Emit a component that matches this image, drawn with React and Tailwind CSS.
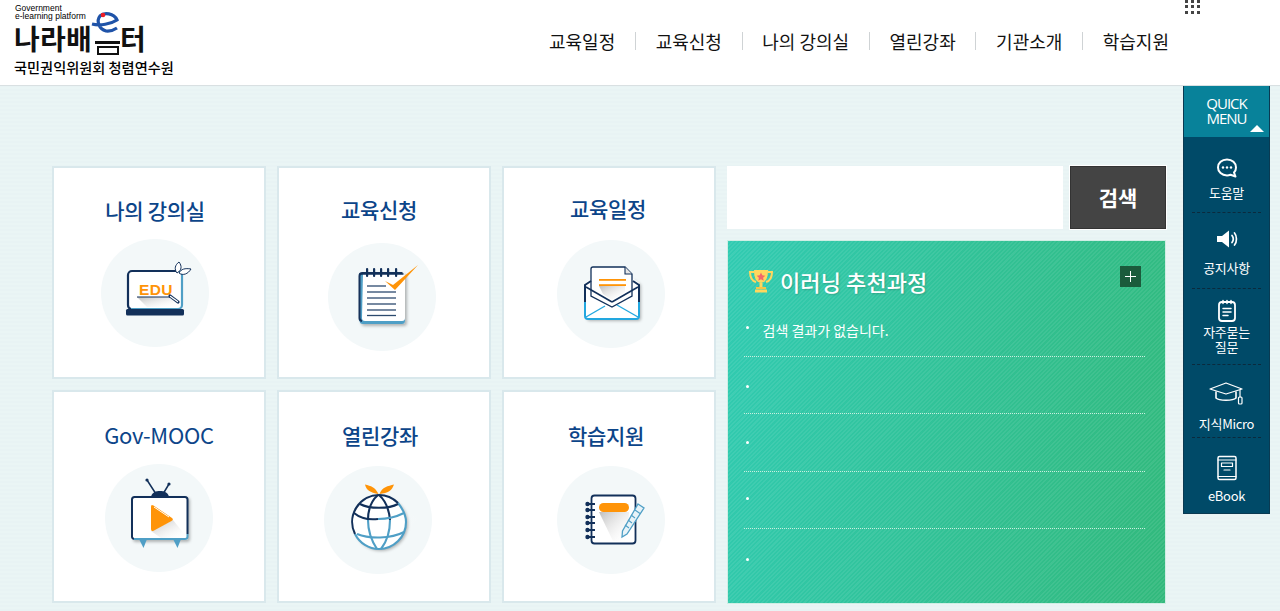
import React from "react";

const Navy = "#12305a";
const Blue = "#4f9fc6";
const Orange = "#ff9408";

function Defs({ id, to = "#bdbdbd" }) {
  return (
    <defs>
      <linearGradient id={id} x1="0" y1="0" x2="1" y2="1">
        <stop offset="0" stopColor={to} />
        <stop offset="1" stopColor="#ffffff" stopOpacity="0" />
      </linearGradient>
      <filter id={id + "s"} x="-20%" y="-20%" width="150%" height="150%">
        <feDropShadow dx="2" dy="2" stdDeviation="1.6" floodColor="#000" floodOpacity="0.28" />
      </filter>
    </defs>
  );
}

function LaptopIcon() {
  return (
    <svg viewBox="0 0 108 108" className="w-[108px] h-[108px]">
      <Defs id="a" />
      <path d="M81 32H31a4 4 0 0 0-4 4v31a4 4 0 0 0 4 4h46a4 4 0 0 0 4-4z" fill="#fff" />
      <path d="M30 70a4 4 0 0 1-3-4V36a4 4 0 0 1 4-4h46" fill="none" stroke={Navy} strokeWidth="2.2" />
      <path d="M77 32a4 4 0 0 1 4 4v30a4 4 0 0 1-4 4H30" fill="none" stroke={Blue} strokeWidth="2.2" />
      <rect x="25" y="70" width="58" height="6.5" rx="1.5" fill={Navy} />
      <polygon points="36,58 69,58 76,68 46,68" fill="url(#a)" />
      <text x="38" y="56" fontSize="15.5" fontWeight="700" fill={Orange} fontFamily="'Liberation Sans',sans-serif" letterSpacing="0.4">EDU</text>
      <path d="M36 58H69" stroke={Navy} strokeWidth="1.2" />
      <path d="M69 57l8 6" stroke={Navy} strokeWidth="3.2" strokeLinecap="round" />
      <path d="M69.5 57.5l7 5" stroke="#fff" strokeWidth="1.3" strokeLinecap="round" />
      <path d="M76 34c-3-4-2-8 2-11 3 4 3 8-2 11z" fill="#fff" stroke={Navy} strokeWidth="1" />
      <path d="M78 34c2-4 6-5 12-4-3 5-8 7-12 4z" fill="#fff" stroke={Navy} strokeWidth="1" />
    </svg>
  );
}

function NoteIcon() {
  return (
    <svg viewBox="0 0 108 108" className="w-[108px] h-[108px]">
      <Defs id="b" />
      <g filter="url(#bs)">
        <rect x="31.5" y="30" width="45.5" height="51" rx="3.5" fill={Blue} />
        <path d="M35 30h39a3 3 0 0 1 3 3v42a3 3 0 0 1-3 3H37a3 3 0 0 1-3-3z" fill="#fff" />
        <path d="M34 78a3 3 0 0 1-2.5-3V33a3 3 0 0 1 3-3h40" fill="none" stroke={Navy} strokeWidth="2" />
      </g>
      {[39, 46, 53, 60, 68].map((x) => (
        <rect key={x} x={x - 1} y="25" width="2.2" height="9" rx="1" fill={Navy} />
      ))}
      <path d="M31.5 31h44" stroke={Navy} strokeWidth="1.6" />
      <g stroke="#2c4a6e" strokeWidth="1.3">
        <path d="M39 43H58" />
        <path d="M39 49H68" />
        <path d="M39 55H68" />
        <path d="M39 61H68" />
        <path d="M39 67H68" />
        <path d="M39 72.5H68" />
      </g>
      <polygon points="57,38 65,42 90,22 67,47" fill={Orange} />
    </svg>
  );
}

function MailIcon() {
  return (
    <svg viewBox="0 0 108 108" className="w-[108px] h-[108px]">
      <Defs id="c" />
      <g filter="url(#cs)">
        <path d="M28 43L35 38V55H75V38L82 43V76a3 3 0 0 1-3 3H31a3 3 0 0 1-3-3z" fill="#fff" />
      </g>
      <path d="M34 56V29a2 2 0 0 1 2-2H68l7 7V56L55 67z" fill="#fff" stroke={Navy} strokeWidth="1.3" />
      <path d="M68 27v7h7" fill="#e6e6e6" stroke={Navy} strokeWidth="1.1" />
      <polygon points="42,46 68,46 68,52 55,60 46,54" fill="url(#c)" />
      <rect x="42" y="39" width="27" height="1.8" fill={Orange} />
      <rect x="42" y="44.2" width="27" height="1.8" fill={Orange} />
      <path d="M34 41L28 45V62" fill="none" stroke={Navy} strokeWidth="2" />
      <path d="M76 41L82 45V62" fill="none" stroke={Navy} strokeWidth="2" />
      <path d="M28 62V76a3 3 0 0 0 3 3H79a3 3 0 0 0 3-3V62" fill="none" stroke="#22a7df" strokeWidth="2" />
      <path d="M29 47L55 62" stroke={Navy} strokeWidth="1.6" />
      <path d="M81 47L55 62" stroke={Navy} strokeWidth="1.6" />
      <path d="M29 77L48 66" stroke="#22a7df" strokeWidth="1.4" />
      <path d="M81 77L60 65" stroke="#22a7df" strokeWidth="1.4" />
    </svg>
  );
}

function TvIcon() {
  return (
    <svg viewBox="0 0 108 108" className="w-[108px] h-[108px]">
      <Defs id="d" />
      <path d="M42 16L51 30M64 20L58 30" stroke={Navy} strokeWidth="1.5" />
      <circle cx="42" cy="16" r="1.6" fill={Navy} />
      <circle cx="64" cy="20" r="1.6" fill={Navy} />
      <path d="M46 33c1-5 5-6 9-6s8 1 9 6z" fill={Navy} />
      <g filter="url(#ds)">
        <rect x="26" y="32" width="57" height="44" rx="3" fill="#fff" />
      </g>
      <polygon points="34,75 42,75 38.500,84" fill={Blue} />
      <polygon points="68,75 76,75 72.500,84" fill={Blue} />
      <path d="M29 75a2.5 2.5 0 0 1-2-2.5V35.500a2.500 2.500 0 0 1 2.500-2.500H80a2.500 2.500 0 0 1 2.500 2.500V70" fill="none" stroke={Navy} strokeWidth="2" />
      <path d="M82.500 70v2.500a2.500 2.500 0 0 1-2.500 2.500H29" fill="none" stroke={Blue} strokeWidth="2" />
      <polygon points="46,67 68,56 80,71 78,74 56,74" fill="url(#d)" />
      <path d="M46 42.500Q46 40 48.500 41.500L67 54q2 1.600-.5 3L49 66.500Q46 68 46 65z" fill={Orange} />
      <path d="M49 43L64 53" stroke="#fff" strokeWidth="1" />
    </svg>
  );
}

function GlobeIcon() {
  return (
    <svg viewBox="0 0 108 108" className="w-[108px] h-[108px]">
      <Defs id="e" to="#e6eef0" />
      <polygon points="62,28 94,52 74,78 55,56" fill="url(#e)" opacity="0.5" />
      <path d="M54.500 28C51 21 47 20 41 18.500c1 5 5 8.500 13.500 9.500z" fill={Orange} />
      <path d="M55.500 28C58 21 64 20 70 18.500c-2 6-6 8.500-14.500 9.500z" fill={Orange} />
      <g filter="url(#es)">
        <circle cx="55" cy="56" r="27" fill="#fff" />
      </g>
      <g fill="none" stroke={Blue} strokeWidth="2.100">
        <path d="M82 56a27 27 0 0 1-27 27 27 27 0 0 1-24-15" />
        <path d="M33 68C45 73 67 73 80 66" />
        <path d="M53 83C47 74 44 65 44 54" />
        <path d="M57 83C64 74 66 65 66 54" />
        <path d="M74 37C78 42 82 49 82 56" />
      </g>
      <g fill="none" stroke={Navy} strokeWidth="2.100">
        <path d="M31 68A27 27 0 0 1 55 29c7 0 14 3 19 8" />
        <path d="M30 47C36 52 45 54 54 53" />
        <path d="M44 54C44 43 47 35 54 29" />
        <path d="M55 29C62 35 65 43 66 54" />
        <path d="M36 38C45 43 65 43 74 38" />
      </g>
      <path d="M54 53C62 53 72 51 80 47" fill="none" stroke={Blue} strokeWidth="2.100" />
    </svg>
  );
}

function BookIcon() {
  return (
    <svg viewBox="0 0 108 108" className="w-[108px] h-[108px]">
      <Defs id="f" />
      <rect x="34.500" y="29.500" width="44" height="48" rx="3" fill="#fff" stroke={Navy} strokeWidth="1.800" />
      <polygon points="42,46 72,46 70,75 56,75" fill="url(#f)" />
      <rect x="42" y="37" width="30" height="9" rx="4.500" fill={Orange} />
      {[38, 44, 51, 57, 64, 71].map((y) => (
        <g key={y}>
          <path d={`M30 ${y}H38`} stroke={Navy} strokeWidth="2" />
          <circle cx="30.500" cy={y} r="2.200" fill={Navy} />
        </g>
      ))}
      <path d="M81 38l6 4-17 26-5 3 .5-6z" fill="#e8f3f8" stroke={Blue} strokeWidth="1.300" />
      <path d="M78 44l5 3.500M74 49l4 3M71 54l4 3M68 59l4 3" stroke={Blue} strokeWidth="1.100" />
    </svg>
  );
}

const cards = [
  { t: "나의 강의실", tc: "mt-[27px] ml-[-8px]", cc: "mt-[14px] ml-[-8px]", I: LaptopIcon, tw: "text-[21px] font-medium tracking-[-0.3px]" },
  { t: "교육신청", tc: "mt-[26px] ml-[-10px]", cc: "mt-[19px] ml-[-4px]", I: NoteIcon, tw: "text-[21px] font-medium tracking-[-0.3px]" },
  { t: "교육일정", tc: "mt-[25px] ml-[-2px]", cc: "mt-[17px] ml-[4px]", I: MailIcon, tw: "text-[21px] font-medium tracking-[-0.3px]" },
  { t: "Gov-MOOC", tc: "mt-[27px]", cc: "mt-[15px]", I: TvIcon, tw: "text-[22px] font-normal tracking-[-0.3px]" },
  { t: "열린강좌", tc: "mt-[28px] ml-[-8px]", cc: "mt-[16px] ml-[-12px]", I: GlobeIcon, tw: "text-[21px] font-medium tracking-[-0.3px]" },
  { t: "학습지원", tc: "mt-[28px] ml-[-6px]", cc: "mt-[16px] ml-[4px]", I: BookIcon, tw: "text-[21px] font-medium tracking-[-0.3px]" },
];

const nav = ["교육일정", "교육신청", "나의 강의실", "열린강좌", "기관소개", "학습지원"];

function Card({ c }) {
  const I = c.I;
  return (
    <div className="h-[213px] bg-white border-2 border-[#d9e8ec] flex flex-col items-center">
      <div className={`leading-[30px] text-[#0c4589] ${c.tw} ${c.tc}`}>{c.t}</div>
      <div className={`w-[108px] h-[108px] rounded-full bg-[#f3f8f9] ${c.cc}`}>
        <I />
      </div>
    </div>
  );
}

function Logo() {
  return (
    <div className="relative h-[85px] pl-[14px] w-[300px]">
      <div className="pt-[5px] text-[8.500px] leading-[7.500px] text-black font-['Liberation_Sans',sans-serif] pl-px">
        Government
        <br />
        e-learning platform
      </div>
      <div className="flex mt-[5px] h-[32px] items-start text-[28px] leading-[26px] font-bold text-[#111] tracking-[0.2px]">
        <span className="w-[81px]">나라배</span>
        <span className="w-[25px] flex flex-col items-center pt-[16px]">
          <span className="w-[25px] h-[2.500px] bg-[#111]" />
          <span className="w-[22px] h-[9px] mt-[2px] border-[2.500px] border-[#111]" />
        </span>
        <span>터</span>
      </div>
      <svg viewBox="0 0 30 24" className="absolute left-[90px] top-[11px] w-[30px] h-[24px]">
        <path d="M2 13C10 15 21 13 27 9 24 2 14 1 10 5 6 10 9 18 16 20 20 20.500 24 19 27 17" fill="none" stroke="#1f53a8" strokeWidth="3.200" />
        <circle cx="13" cy="4" r="2.300" fill="#ef1c25" />
      </svg>
      <div className="mt-px text-[14.200px] leading-[18px] font-medium text-black">국민권익위원회 청렴연수원</div>
    </div>
  );
}

function Dots() {
  return (
    <svg width="16" height="14" viewBox="0 0 16 14" className="ml-[16px]">
      {[0, 5, 11].map((y) =>
        [0, 6, 12].map((x) => <rect key={`${x}-${y}`} x={x} y={y} width="3" height="3" fill="#444" />)
      )}
    </svg>
  );
}

const S = { fill: "none", stroke: "#fff", strokeLinecap: "round", strokeLinejoin: "round" };

const quick = [
  {
    l: ["도움말"], cls: "h-[76px] pt-[18px]", mt: "mt-[4px]", ic: (
      <svg width="24" height="22" viewBox="0 0 24 22">
        <path d="M12 2.500c5.300 0 9 3.500 9 8 0 2-.7 3.700-2 5l1.500 4-5-1.700c-1.100.4-2.300.6-3.500.6-5.300 0-9-3.500-9-8s3.700-7.900 9-7.900z" {...S} strokeWidth="2" />
        <circle cx="8" cy="10.500" r="1.200" fill="#fff" /><circle cx="12" cy="10.500" r="1.200" fill="#fff" /><circle cx="16" cy="10.500" r="1.200" fill="#fff" />
      </svg>
    )
  },
  {
    l: ["공지사항"], cls: "h-[76px] pt-[13px]", mt: "mt-[8px]", ic: (
      <svg width="24" height="24" viewBox="0 0 24 24">
        <path d="M2 9h5l7-5.500v17L7 15H2z" fill="#fff" />
        <path d="M17 8.500c1.500 2 1.500 5 0 7M19.500 6c2.600 3 2.600 9 0 12" {...S} strokeWidth="1.700" />
      </svg>
    )
  },
  {
    l: ["자주묻는", "질문"], cls: "h-[76px] pt-[9px]", mt: "mt-0", ic: (
      <svg width="22" height="24" viewBox="0 0 22 24">
        <rect x="3" y="3" width="16" height="19" rx="3" {...S} strokeWidth="1.800" />
        <path d="M7 1.500v3M11 1.500v3M15 1.500v3M7 9.500h8M7 13h8M7 16.500h5" {...S} strokeWidth="1.500" />
      </svg>
    )
  },
  {
    l: ["지식Micro"], cls: "h-[73px] pt-[15px]", mt: "mt-[9.500px]", ic: (
      <svg width="36" height="24" viewBox="0 0 36 24">
        <path d="M17 2L33 8 17 13 1 8z" {...S} strokeWidth="1.300" />
        <path d="M7 11v6c3 3 17 3 20 0v-6" {...S} strokeWidth="1.600" />
        <path d="M31 9v7" {...S} strokeWidth="1.200" />
        <rect x="29.500" y="16" width="3.500" height="7" rx="1" {...S} strokeWidth="1.200" />
      </svg>
    )
  },
  {
    l: ["eBook"], cls: "h-[75px] pt-[17px]", mt: "mt-[6.500px]", ic: (
      <svg width="22" height="26" viewBox="0 0 22 26">
        <rect x="2" y="1.500" width="18" height="23" rx="1.500" {...S} strokeWidth="1.500" />
        <path d="M2 5h18M2 21.500h18" {...S} strokeWidth="1" />
        <rect x="5.500" y="8" width="11" height="3.500" {...S} strokeWidth="1.200" />
        <path d="M8 15h6" {...S} strokeWidth="1.200" />
      </svg>
    )
  },
];

function QuickMenu() {
  return (
    <div className="ml-[17px] w-[87px] border-x border-b border-[#0a3a52]">
      <div className="h-[51px] bg-[#08829a] flex flex-col items-center pt-[10px] text-white text-[15px] leading-[15px] tracking-[-1px] font-['Open_Sans',sans-serif] font-normal">
        <span>QUICK</span>
        <span>MENU</span>
        <span className="self-end mr-[5px] mt-[-1px] w-0 h-0 border-x-[7px] border-x-transparent border-b-[7px] border-b-white" />
      </div>
      <div className="bg-[#004a68] px-[8px]">
        {quick.map((q, i) => (
          <div
            key={q.l[0]}
            className={`flex flex-col items-center ${q.cls} ${i < quick.length - 1 ? "border-b border-dashed border-[#0b2a3d]" : ""}`}
          >
            <div className="h-[26px] flex items-center justify-center">{q.ic}</div>
            <div className={`${q.mt} text-white text-[13px] leading-[15px] text-center tracking-[-0.3px] whitespace-nowrap`}>
              {q.l.map((x) => (
                <div key={x}>{x}</div>
              ))}
            </div>
          </div>
        ))}
      </div>
    </div>
  );
}

function Trophy() {
  return (
    <svg width="26" height="24" viewBox="0 0 26 24">
      <path d="M6 3H2c0 6 2 9 6 10M20 3h4c0 6-2 9-6 10" fill="none" stroke="#ffd75e" strokeWidth="2" />
      <path d="M6 1h14c0 8-2 12-7 13C8 13 6 9 6 1z" fill="#ffd75e" />
      <path d="M13 3.500l1.300 2.800 3 .4-2.200 2 .6 3-2.700-1.500-2.700 1.500.6-3-2.200-2 3-.4z" fill="#f2686a" />
      <rect x="11.500" y="14" width="3" height="4" fill="#ffd75e" />
      <rect x="8" y="18" width="10" height="2" fill="#f6c544" />
      <rect x="7" y="20.500" width="12" height="3" fill="#ffd75e" />
    </svg>
  );
}

function Panel() {
  const rows = [
    { r: "검색 결과가 없습니다.", c: "h-[37px]" },
    { r: "", c: "h-[57px] pt-[22px]" },
    { r: "", c: "h-[58px] pt-[21px]" },
    { r: "", c: "h-[57px] pt-[19px]" },
    { r: "", c: "h-[58px] pt-[23px]" },
  ];
  return (
    <div className="mt-[11px] h-[364px] border border-[#cfeee4] bg-[repeating-linear-gradient(135deg,rgba(255,255,255,0.07)_0,rgba(255,255,255,0.07)_1.500px,transparent_1.500px,transparent_3px),linear-gradient(100deg,#31cbb2,#32b97c)] pl-[16px] pr-[20px]">
      <div className="flex items-center pt-[26px] pl-[4px]">
        <Trophy />
        <div className="ml-[6px] text-[22px] leading-[28px] font-medium text-white tracking-[0.1px] [text-shadow:1px_1px_2px_rgba(0,0,0,0.18)]">
          이러닝 추천과정
        </div>
        <div className="ml-auto mr-[4px] mt-[-10px] w-[21px] h-[21px] bg-[#1b5b3c] text-white flex items-center justify-center">
          <svg width="11" height="11" viewBox="0 0 11 11"><path d="M5.500 0v11M0 5.500h11" stroke="#fff" strokeWidth="1" /></svg>
        </div>
      </div>
      <ul className="mt-[25px]">
        {rows.map((row, i) => (
          <li key={i} className={`${row.c} flex items-start text-white text-[14px] leading-[20px] ${i < 4 ? "border-b border-dotted border-[#c8efdf]" : ""}`}>
            <span className="w-[2.500px] h-[2.500px] bg-white rounded-full ml-[2px] mt-[6px] shrink-0" />
            <span className="ml-[14px] font-normal">{row.r}</span>
          </li>
        ))}
      </ul>
    </div>
  );
}

export default function App() {
  return (
    <div className="w-[1280px] h-[611px] overflow-hidden bg-[repeating-linear-gradient(0deg,#e8f3f4_0,#e8f3f4_2px,#eaf5f5_2px,#eaf5f5_4px)] font-['Noto_Sans_CJK_KR','Noto_Sans',sans-serif]">
      <header className="h-[86px] bg-white border-b border-[#d9e0e2] flex items-start">
        <Logo />
        <nav className="ml-[249px] pt-[28px] flex items-center text-[18px] leading-[26px] font-normal text-[#111]">
          {nav.map((n, i) => (
            <React.Fragment key={n}>
              {i > 0 && <span className="w-px h-[18px] bg-[#cfd3d5] mx-[19.700px]" />}
              <span>{n}</span>
            </React.Fragment>
          ))}
        </nav>
        <Dots />
      </header>
      <main className="flex items-start">
        <div className="ml-[52px] mt-[80px] w-[664px] grid grid-cols-3 gap-[11px]">
          {cards.map((c) => (
            <Card key={c.t} c={c} />
          ))}
        </div>
        <div className="ml-[11px] mt-[80px] w-[439px]">
          <div className="flex">
            <div className="w-[336px] h-[63px] bg-white" />
            <div className="ml-[7px] w-[96px] h-[63px] bg-[#444] border border-[#333] outline outline-white flex items-center justify-center text-white text-[21px] font-bold">
              검색
            </div>
          </div>
          <Panel />
        </div>
        <QuickMenu />
      </main>
    </div>
  );
}
